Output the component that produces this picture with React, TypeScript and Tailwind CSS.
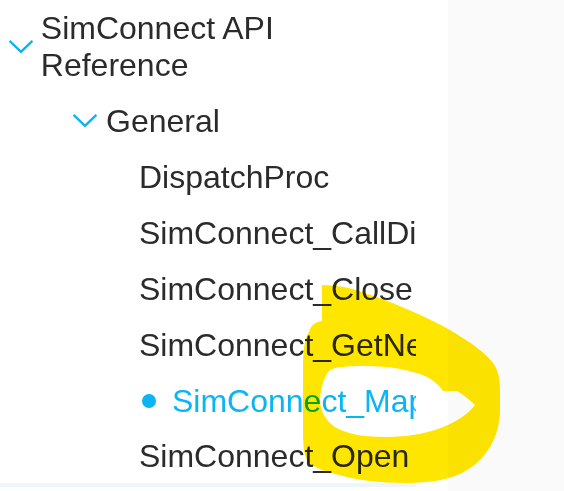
import React from "react";

const Chevron = () => (
  <svg width="24" height="14" viewBox="0 0 24 14" className="shrink-0">
    <polyline points="1.5,1.8 12,11.8 22.5,1.8" fill="none" stroke="#0ab4f5" strokeWidth="2.5" strokeLinecap="square" />
  </svg>
);

const children = [
  "DispatchProc",
  "SimConnect_CallDispatch",
  "SimConnect_Close",
  "SimConnect_GetNextDispatch",
];

export default function App() {
  return (
    <div className="relative w-[564px] h-[491px] bg-[#fafafa] overflow-hidden font-['Liberation_Sans',Arial,sans-serif] text-[32px] text-[#2b2b2b]">
      <div className="w-[448px] h-full bg-white">
        <div className="w-[416px] overflow-hidden">
          <div className="flex items-center pt-[9.8px] pb-[9.6px]">
            <div className="w-[42px] pl-[9px] flex"><Chevron /></div>
            <div className="leading-[36.8px]">SimConnect API Reference</div>
          </div>
          <div className="flex items-center py-[9.6px] pl-[73px]">
            <Chevron />
            <div className="ml-[9px] leading-[36.8px] whitespace-nowrap">General</div>
          </div>
          {children.map((c) => (
            <div key={c} className="py-[9.6px] pl-[139px] leading-[36.8px] whitespace-nowrap">{c}</div>
          ))}
          <div className="flex items-center py-[9.6px] pl-[142px]">
            <div className="w-[14px] h-[14px] rounded-full bg-[#0ab4f5] shrink-0" />
            <div className="ml-[16px] leading-[36.8px] whitespace-nowrap text-[#0ab4f5]">SimConnect_MapClientEventToSimEvent</div>
          </div>
          <div className="pt-[9.6px] pb-[7.3px] pl-[139px] leading-[36.8px] whitespace-nowrap">SimConnect_Open</div>
        </div>
        <div className="h-[4px] w-[416px] bg-[#eef6fc]" />
      </div>
      <svg className="absolute left-0 top-0 mix-blend-multiply pointer-events-none" width="564" height="491" viewBox="0 0 564 491">
        <path
          fillRule="evenodd"
          fill="#ffe600"
          d="M322 285 C338 285 350 288 362 292 C395 303 425 316 450 330 C470 342 485 352 493 363 C499 371 500 380 500 392 L500 413 C499 428 495 440 488 450 C480 462 470 470 455 476 C440 481 425 483 405 483 C380 483 355 480 335 474 C320 470 310 466 306 458 C303 450 303 440 303 420 L303 365 C303 348 305 338 309 332 C311 325 315 322 322 321 Z
             M330 370 C336 367 345 366 365 366 C390 366 410 370 425 376 C433 380 438 384 443 391 L457 391 C465 396 470 400 475 405 C470 412 462 418 448 425 C430 433 410 437 385 437 C360 437 345 433 335 427 C326 421 321 412 320 402 C320 390 324 376 330 370 Z"
        />
      </svg>
    </div>
  );
}
